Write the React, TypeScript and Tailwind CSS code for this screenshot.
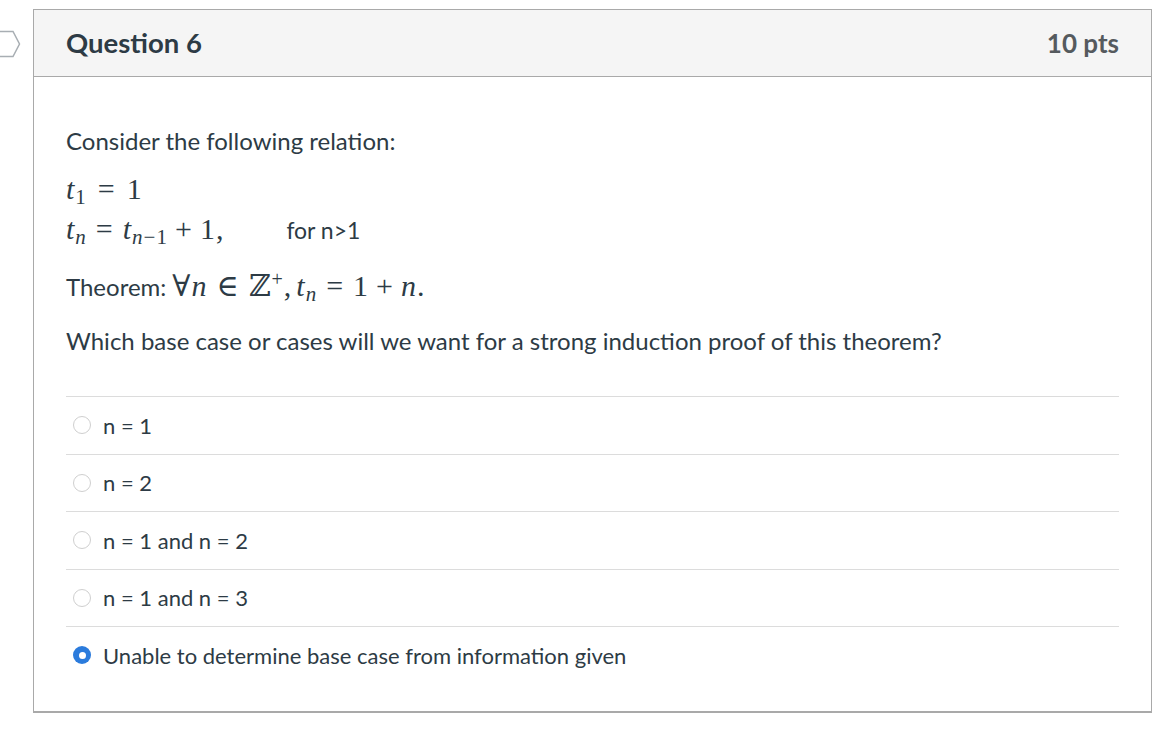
import React from "react";

const lato = { fontFamily: "Lato, 'Open Sans', sans-serif" };

function V({ children }: { children: React.ReactNode }) {
  return <span className="italic">{children}</span>;
}

function Sub({ children }: { children: React.ReactNode }) {
  return (
    <span className="text-[21px]" style={{ verticalAlign: "-5px" }}>
      {children}
    </span>
  );
}

function Rel({ children }: { children: React.ReactNode }) {
  return <span className="mx-[9px]">{children}</span>;
}

function Bin({ children }: { children: React.ReactNode }) {
  return <span className="mx-[7px]">{children}</span>;
}

function Math({ children }: { children: React.ReactNode }) {
  return (
    <span
      className="text-[30px] text-[#2d3b45] whitespace-nowrap tracking-[1px]"
      style={{ fontFamily: "'Liberation Serif', 'DejaVu Serif', serif" }}
    >
      {children}
    </span>
  );
}

function Radio({ checked }: { checked?: boolean }) {
  if (checked) {
    return (
      <span className="w-[18px] h-[18px] rounded-full bg-[#2b7bdc] flex items-center justify-center shrink-0">
        <span className="w-[7px] h-[7px] rounded-full bg-white" />
      </span>
    );
  }
  return <span className="w-[18px] h-[18px] rounded-full border border-[#cfcfcf] bg-white shrink-0" />;
}

const options = [
  { label: "n = 1" },
  { label: "n = 2" },
  { label: "n = 1 and n = 2" },
  { label: "n = 1 and n = 3" },
  { label: "Unable to determine base case from information given", checked: true },
];

export default function App() {
  return (
    <div className="w-[1166px] h-[748px] bg-white relative overflow-hidden" style={lato}>
      <svg className="absolute left-0 top-[30px]" width="22" height="28" viewBox="0 0 22 28">
        <path d="M-2 1.5 H13 L19.5 14 L13 26.5 H-2" fill="none" stroke="#a8aeb3" strokeWidth="1.5" />
      </svg>
      <div className="ml-[33px] pt-[9px]">
        <div className="w-[1119px] border border-[#a9a9a9] border-b-2 flex flex-col">
          <div className="h-[67px] bg-[#f5f5f5] border-b border-[#a9a9a9] flex items-center justify-between px-[32px]">
            <span className="text-[27.5px] font-bold text-[#2d3b45]">Question 6</span>
            <span className="text-[26px] font-bold text-[#555a5e]">10 pts</span>
          </div>
          <div className="px-[32px] pt-[50px] pb-[27px] text-[#2d3b45]">
            <p className="text-[24px] leading-[28px]">Consider the following relation:</p>
            <div className="mt-[15px]">
              <div className="h-[40px] flex items-center">
                <Math>
                  <V>t</V>
                  <Sub>1</Sub>
                  <span className="ml-[11px]">=</span>
                  <span className="ml-[11px]">1</span>
                </Math>
              </div>
              <div className="h-[40px] flex items-center">
                <Math>
                  <V>t</V>
                  <Sub>
                    <V>n</V>
                  </Sub>
                  <Rel>=</Rel>
                  <V>t</V>
                  <Sub>
                    <V>n</V>−1
                  </Sub>
                  <Bin>+</Bin>1,
                </Math>
                <span className="ml-[62px] text-[23px]">for n&gt;1</span>
              </div>
            </div>
            <div className="mt-[17px] h-[40px] text-[24px] flex items-center">
              <span>Theorem:</span>
              <span className="ml-[6px]">
                <Math>
                  ∀<V>n</V>
                  <Rel>∈</Rel>ℤ
                  <span className="text-[20px]" style={{ verticalAlign: "10px" }}>
                    +
                  </span>
                  ,<span className="ml-[4px]"></span>
                  <V>t</V>
                  <Sub>
                    <V>n</V>
                  </Sub>
                  <Rel>=</Rel>1<Bin>+</Bin>
                  <V>n</V>.
                </Math>
              </span>
            </div>
            <p className="mt-[20px] text-[24px] leading-[28px]">
              Which base case or cases will we want for a strong induction proof of this theorem?
            </p>
            <div className="mt-[41px]">
              {options.map((o, i) => (
                <div key={i} className="border-t border-[#dcdcdc] h-[57.5px] flex items-center pl-[7px] gap-[12px]">
                  <Radio checked={o.checked} />
                  <span className="text-[22px] text-[#2d3b45]">{o.label}</span>
                </div>
              ))}
            </div>
          </div>
        </div>
      </div>
    </div>
  );
}
